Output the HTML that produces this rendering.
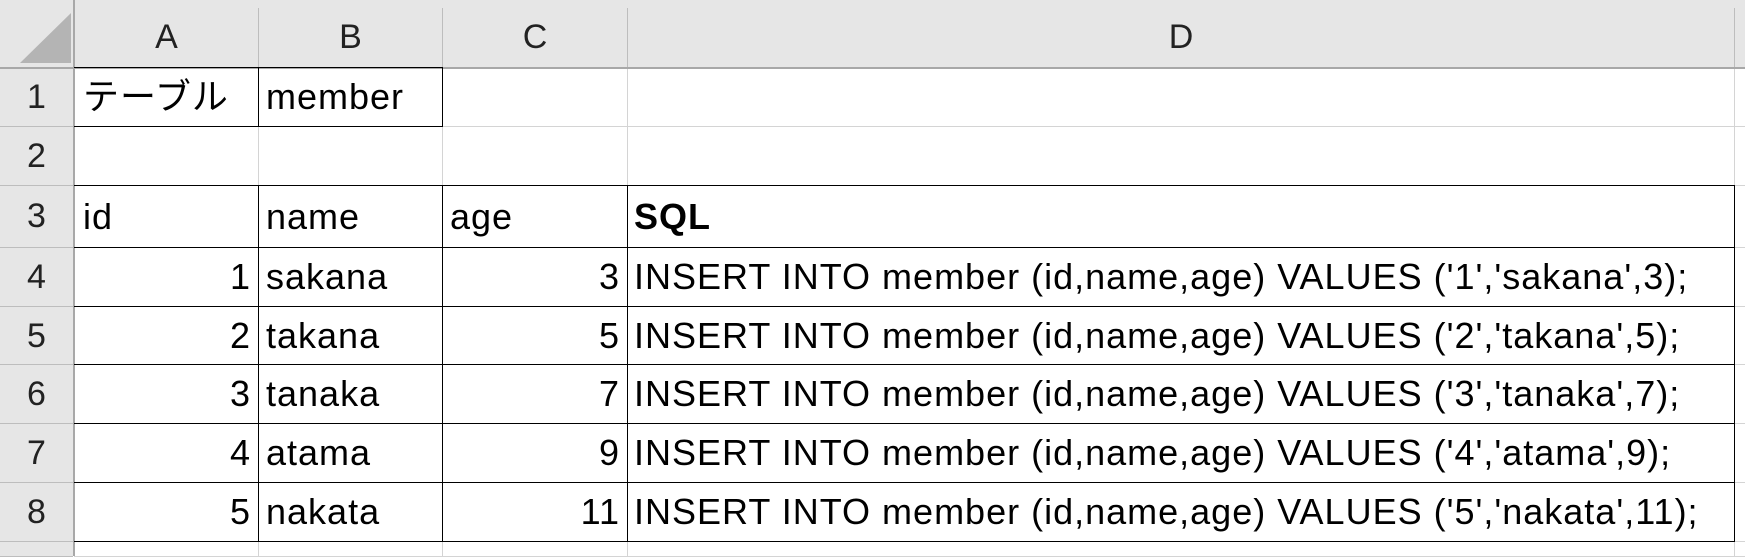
<!DOCTYPE html>
<html><head><meta charset="utf-8"><style>
body{margin:0;width:1745px;height:556px;background:#fff;overflow:hidden;position:relative;font-family:"Liberation Sans","Noto Sans CJK JP",sans-serif;}
.h{position:absolute;background:#e6e6e6;}
.l{position:absolute;}
.t{position:absolute;font-size:36px;letter-spacing:1px;color:#000;line-height:1;white-space:nowrap;}
.hc{position:absolute;font-size:34px;color:#222;text-align:center;line-height:1;}
</style></head><body>
<div class="h" style="left:0;top:0;width:1745px;height:67px"></div>
<div class="h" style="left:0;top:0;width:74px;height:556px"></div>
<svg class="l" style="left:0;top:0" width="74" height="67"><polygon points="20,63 71,63 71,13" fill="#b4b4b4"/></svg>
<div id="g"></div>
<script>
var g=document.getElementById('g'),h='';
var cols=[74,258,442,627,1734,1745];
var rows=[67,126,185,247,306,364,423,482,541,556];
function L(x,y,w,hh,c){h+='<div class="l" style="left:'+x+'px;top:'+y+'px;width:'+w+'px;height:'+hh+'px;background:'+c+'"></div>';}
for(var i=1;i<cols.length;i++)L(cols[i],67,1,489,'#d4d4d4');
for(var j=1;j<rows.length;j++)L(74,rows[j],1671,1,'#d4d4d4');
for(var i=1;i<cols.length;i++)L(cols[i],8,1,59,'#bdbdbd');
L(0,67,1745,2,'#a8a8a8');L(73,0,2,556,'#a8a8a8');
for(var j=1;j<rows.length;j++)L(0,rows[j],73,1,'#bdbdbd');
L(74,67,368,1,'#000');L(74,126,368,1,'#000');L(258,67,1,60,'#000');L(442,67,1,60,'#000');
for(var j=2;j<=8;j++)L(74,rows[j],1661,1,'#000');
[258,442,627,1734].forEach(function(x){L(x,185,1,357,'#000');});
g.innerHTML=h;
</script>
<div class="hc" style="left:75px;top:20px;width:183px">A</div>
<div class="hc" style="left:259px;top:20px;width:183px">B</div>
<div class="hc" style="left:443px;top:20px;width:184px">C</div>
<div class="hc" style="left:628px;top:20px;width:1106px">D</div>
<div class="hc" style="left:0;top:80px;width:73px">1</div>
<div class="hc" style="left:0;top:139px;width:73px">2</div>
<div class="hc" style="left:0;top:199px;width:73px">3</div>
<div class="hc" style="left:0;top:260px;width:73px">4</div>
<div class="hc" style="left:0;top:319px;width:73px">5</div>
<div class="hc" style="left:0;top:377px;width:73px">6</div>
<div class="hc" style="left:0;top:436px;width:73px">7</div>
<div class="hc" style="left:0;top:495px;width:73px">8</div>

<div class="t" style="left:83px;top:79px">テーブル</div>
<div class="t" style="left:266px;top:79px">member</div>
<div class="t" style="left:83px;top:199px">id</div>
<div class="t" style="left:266px;top:199px">name</div>
<div class="t" style="left:450px;top:199px">age</div>
<div class="t" style="left:634px;top:199px;font-weight:bold">SQL</div>

<div class="t" style="left:74px;width:177px;text-align:right;top:259px">1</div>
<div class="t" style="left:74px;width:177px;text-align:right;top:318px">2</div>
<div class="t" style="left:74px;width:177px;text-align:right;top:376px">3</div>
<div class="t" style="left:74px;width:177px;text-align:right;top:435px">4</div>
<div class="t" style="left:74px;width:177px;text-align:right;top:494px">5</div>
<div class="t" style="left:266px;top:259px">sakana</div>
<div class="t" style="left:266px;top:318px">takana</div>
<div class="t" style="left:266px;top:376px">tanaka</div>
<div class="t" style="left:266px;top:435px">atama</div>
<div class="t" style="left:266px;top:494px">nakata</div>
<div class="t" style="left:442px;width:178px;text-align:right;top:259px">3</div>
<div class="t" style="left:442px;width:178px;text-align:right;top:318px">5</div>
<div class="t" style="left:442px;width:178px;text-align:right;top:376px">7</div>
<div class="t" style="left:442px;width:178px;text-align:right;top:435px">9</div>
<div class="t" style="left:442px;width:178px;text-align:right;top:494px">11</div>
<div class="t" style="left:634px;top:259px">INSERT INTO member (id,name,age) VALUES ('1','sakana',3);</div>
<div class="t" style="left:634px;top:318px">INSERT INTO member (id,name,age) VALUES ('2','takana',5);</div>
<div class="t" style="left:634px;top:376px">INSERT INTO member (id,name,age) VALUES ('3','tanaka',7);</div>
<div class="t" style="left:634px;top:435px">INSERT INTO member (id,name,age) VALUES ('4','atama',9);</div>
<div class="t" style="left:634px;top:494px">INSERT INTO member (id,name,age) VALUES ('5','nakata',11);</div>
</body></html>
